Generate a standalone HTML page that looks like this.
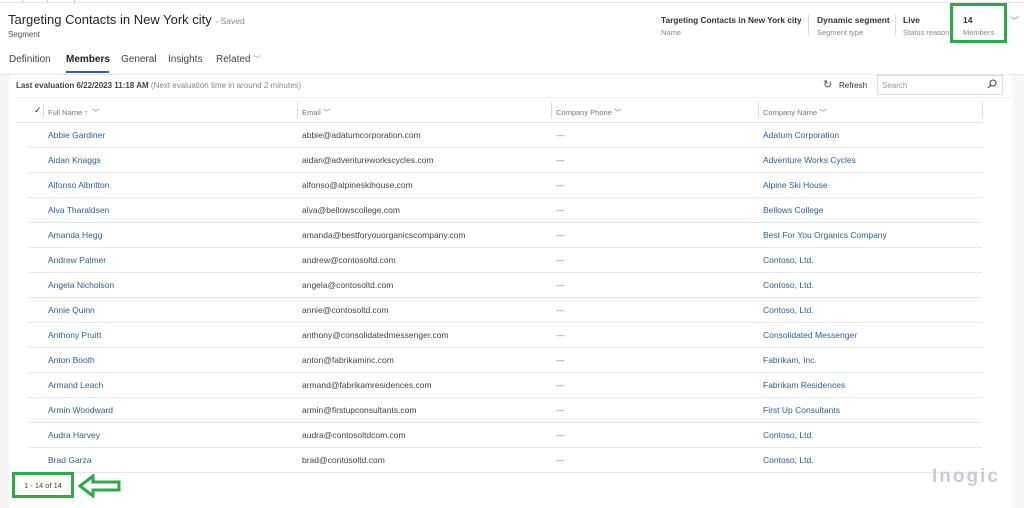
<!DOCTYPE html>
<html><head><meta charset="utf-8"><style>
*{margin:0;padding:0;box-sizing:border-box}
body{width:1024px;height:508px;overflow:hidden;background:#fff;font-family:"Liberation Sans",sans-serif;position:relative;color:#323130}
.a{position:absolute;white-space:nowrap}
.lnk{color:#2d5f95;font-size:8.5px}
.em{color:#444;font-size:8.5px}
.hd{color:#777;font-size:7.5px}
.line{position:absolute;height:1px;background:#e8e8e8;left:28px;width:954px}
</style></head><body>
<div class="a" style="left:0;top:0;width:1024px;height:3px;border-bottom:1px solid #e3e3e3"></div>
<div class="a" style="left:22px;top:0;width:1px;height:3px;background:#ccc"></div>
<div class="a" style="left:47px;top:0;width:1px;height:3px;background:#ccc"></div>
<div class="a" style="left:74px;top:0;width:1px;height:3px;background:#ccc"></div>
<div class="a" style="left:8px;top:12px;font-size:13px;color:#222">Targeting Contacts in New York city <span style="font-size:8.5px;color:#888">- Saved</span></div>
<div class="a" style="left:8px;top:30px;font-size:8px;color:#555">Segment</div>
<div class="a" style="left:9px;top:54px;font-size:10px;color:#444">Definition</div>
<div class="a" style="left:66px;top:54px;font-size:10px;color:#222;font-weight:bold">Members</div>
<div class="a" style="left:66px;top:71px;width:43px;height:2px;background:#2f5fa8"></div>
<div class="a" style="left:121px;top:54px;font-size:10px;color:#444">General</div>
<div class="a" style="left:168px;top:54px;font-size:10px;color:#444">Insights</div>
<div class="a" style="left:216px;top:54px;font-size:10px;color:#444">Related <span style="color:#999;font-size:8px">﹀</span></div>
<div class="a" style="left:661px;top:15px;font-size:8.3px;font-weight:bold;color:#333">Targeting Contacts in New York city</div>
<div class="a" style="left:661px;top:28px;font-size:7.5px;color:#888">Name</div>
<div class="a" style="left:808px;top:14px;width:1px;height:22px;background:#ddd"></div>
<div class="a" style="left:817px;top:15px;font-size:8.5px;font-weight:bold;color:#333">Dynamic segment</div>
<div class="a" style="left:817px;top:28px;font-size:7.5px;color:#888">Segment type</div>
<div class="a" style="left:895px;top:14px;width:1px;height:22px;background:#ddd"></div>
<div class="a" style="left:903px;top:15px;font-size:8.5px;font-weight:bold;color:#333">Live</div>
<div class="a" style="left:903px;top:28px;font-size:7.5px;color:#888">Status reason</div>
<div class="a" style="left:950px;top:3px;width:57px;height:40px;border:3px solid #2fa84a"></div>
<div class="a" style="left:963px;top:15px;font-size:8.5px;font-weight:bold;color:#333">14</div>
<div class="a" style="left:963px;top:28px;font-size:7.5px;color:#888">Members</div>
<div class="a" style="left:1010px;top:14px;font-size:9px;color:#888">﹀</div>
<div class="a" style="left:0;top:74px;width:1024px;height:1px;background:#e6e6e6"></div>
<div class="a" style="left:0;top:75px;width:9px;height:433px;background:#f5f5f5"></div>
<div class="a" style="left:1012px;top:75px;width:12px;height:433px;background:#f7f7f7"></div>
<div class="a" style="left:16px;top:81px;font-size:8px;color:#444"><b style="font-weight:bold;color:#444">Last evaluation 6/22/2023 11:18 AM</b> <span style="color:#888">(Next evaluation time in around 2 minutes)</span></div>
<div class="a" style="left:823px;top:78px;font-size:11px;color:#555">↻</div>
<div class="a" style="left:839px;top:81px;font-size:8px;color:#333">Refresh</div>
<div class="a" style="left:877px;top:75px;width:126px;height:20px;border:1px solid #ddd"></div>
<div class="a" style="left:882px;top:81px;font-size:8px;color:#999">Search</div>
<svg class="a" style="left:987px;top:79px" width="10" height="10" viewBox="0 0 10 10"><circle cx="6" cy="4" r="3" fill="none" stroke="#444" stroke-width="1.1"/><path d="M4 6 L1 9" stroke="#444" stroke-width="1.2"/></svg>
<div class="a" style="left:16px;top:97px;width:996px;height:1px;background:#eee"></div>
<div class="a" style="left:34px;top:105px;font-size:9px;color:#222">✓</div>
<div class="a" style="left:43px;top:104px;width:1px;height:14px;background:#ddd"></div>
<div class="a hd" style="left:48px;top:107px">Full Name ↑ &nbsp;﹀</div>
<div class="a" style="left:297px;top:102px;width:1px;height:16px;background:#ddd"></div>
<div class="a hd" style="left:302px;top:107px">Email ﹀</div>
<div class="a" style="left:551px;top:102px;width:1px;height:16px;background:#ddd"></div>
<div class="a hd" style="left:556px;top:107px">Company Phone ﹀</div>
<div class="a" style="left:758px;top:102px;width:1px;height:16px;background:#ddd"></div>
<div class="a hd" style="left:763px;top:107px">Company Name ﹀</div>
<div class="a" style="left:982px;top:102px;width:1px;height:16px;background:#ddd"></div>
<div class="a" style="left:16px;top:122px;width:966px;height:1px;background:#e3e3e3"></div>
<div id="rows"></div>
<div class="a" style="left:12px;top:472px;width:62px;height:26px;border:3px solid #2fa84a"></div>
<div class="a" style="left:24px;top:481px;font-size:7.5px;color:#444">1 - 14 of 14</div>
<svg class="a" style="left:78px;top:474px" width="44" height="24" viewBox="0 0 44 24"><path d="M2 12 L15 2 L15 8 L41 8 L41 16 L15 16 L15 22 Z" fill="none" stroke="#2fa84a" stroke-width="3" stroke-linejoin="miter"/></svg>
<div class="a" style="left:932px;top:466px;font-size:19px;font-weight:bold;color:#c9cbdb;letter-spacing:2px">Inogic</div>
<script>
var d=[["Abbie Gardiner","abbie@adatumcorporation.com","Adatum Corporation"],["Aidan Knaggs","aidan@adventureworkscycles.com","Adventure Works Cycles"],["Alfonso Albritton","alfonso@alpineskihouse.com","Alpine Ski House"],["Alva Tharaldsen","alva@bellowscollege.com","Bellows College"],["Amanda Hegg","amanda@bestforyouorganicscompany.com","Best For You Organics Company"],["Andrew Palmer","andrew@contosoltd.com","Contoso, Ltd."],["Angela Nicholson","angela@contosoltd.com","Contoso, Ltd."],["Annie Quinn","annie@contosoltd.com","Contoso, Ltd."],["Anthony Pruitt","anthony@consolidatedmessenger.com","Consolidated Messenger"],["Anton Booth","anton@fabrikaminc.com","Fabrikam, Inc."],["Armand Leach","armand@fabrikamresidences.com","Fabrikam Residences"],["Armin Woodward","armin@firstupconsultants.com","First Up Consultants"],["Audra Harvey","audra@contosoltdcom.com","Contoso, Ltd."],["Brad Garza","brad@contosoltd.com","Contoso, Ltd."]];
var h="";d.forEach(function(r,i){var y=130+i*25;h+='<div class="a lnk" style="left:48px;top:'+y+'px">'+r[0]+'</div><div class="a em" style="left:302px;top:'+y+'px">'+r[1]+'</div><div class="a em" style="left:556px;top:'+y+'px;color:#777">---</div><div class="a lnk" style="left:763px;top:'+y+'px">'+r[2]+'</div><div class="line" style="top:'+(y+17)+'px"></div>';});
document.getElementById("rows").innerHTML=h;
</script>
</body></html>
